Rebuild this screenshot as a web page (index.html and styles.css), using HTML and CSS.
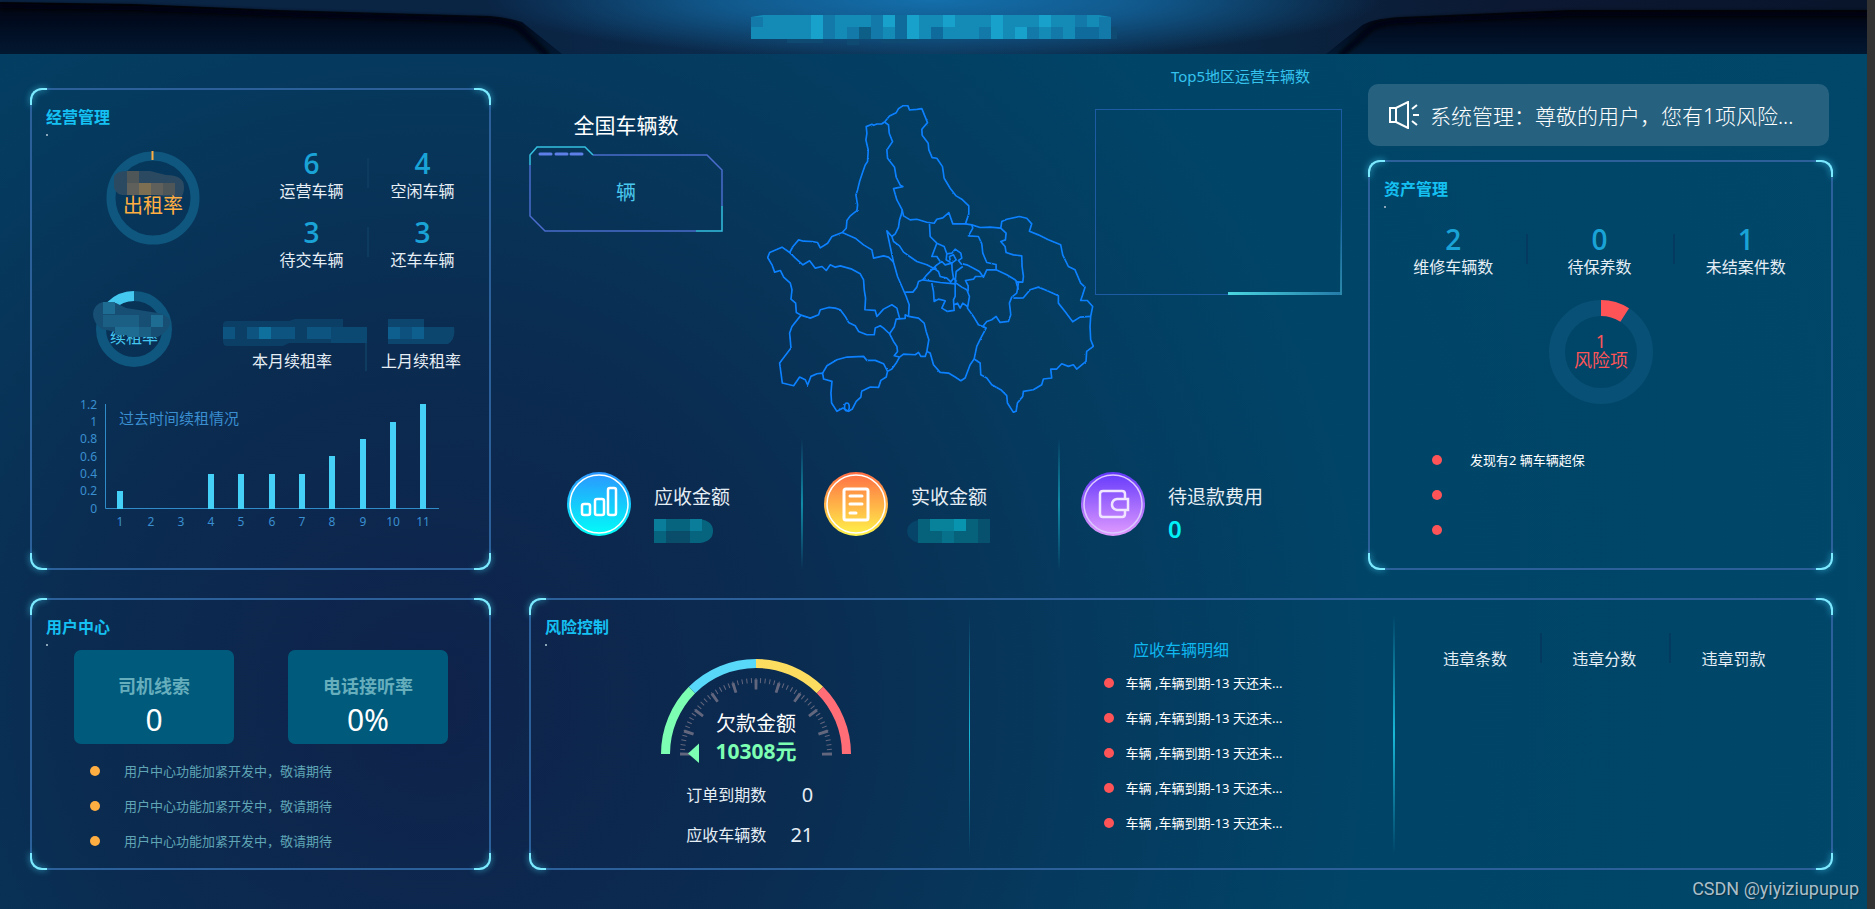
FILE: index.html
```html
<!DOCTYPE html>
<html lang="zh-CN">
<head>
  <meta charset="UTF-8">
  <meta name="viewport" content="width=device-width, initial-scale=1.0">
  <title>车辆运营数据大屏</title>
  <link rel="stylesheet" href="styles.css">
</head>
<body>
  <header class="top-bar">
    <svg class="top-bg" viewBox="0 0 1867 54" preserveAspectRatio="none" aria-hidden="true">
      <defs>
        <linearGradient id="wing" x1="0" y1="0" x2="0" y2="1">
          <stop offset="0" stop-color="#02040c"/>
          <stop offset="0.35" stop-color="#010a1d"/>
          <stop offset="1" stop-color="#021831"/>
        </linearGradient>
        <filter id="edge" x="-5%" y="-20%" width="110%" height="140%">
          <feGaussianBlur stdDeviation="2"/>
        </filter>
      </defs>
      <path d="M0 2L135 4 279 10 490 16Q510 18 522 22L562 54H0z" fill="url(#wing)"/>
      <path d="M0 6L135 8 279 14 490 20Q508 22 518 27L548 56" fill="none" stroke="#000208" stroke-width="5" filter="url(#edge)"/>
      <path d="M1326 54L1360 27Q1368 19 1401 17L1569 10H1867V54z" fill="url(#wing)"/>
      <path d="M1340 56L1368 31Q1374 23 1401 21L1569 14H1867" fill="none" stroke="#000208" stroke-width="5" filter="url(#edge)"/>
    </svg>
    <svg class="top-title" width="366" height="30" viewBox="0 0 366 30" aria-hidden="true">
      <path fill="#0f4a72" d="M-6 12h378v12h-378zM36 24h36v4h-36zM96 24h12v8h-12zM130 24h36v4h-36z"/>
      <path fill="#138bb6" d="M0 2L12 0H348L360 2V24H0z"/>
      <path fill="#18a1cb" d="M60 0h12v24h-12zM132 0h12v12h-12zM156 0h12v24h-12zM192 0h12v12h-12zM240 0h12v24h-12zM288 0h12v12h-12zM264 12h12v12h-12z"/>
      <path fill="#1279a8" d="M0 2h12v10H0zM72 0h12v24h-12zM96 12h12v12h-12zM120 0h12v24h-12zM180 12h12v12h-12zM228 12h12v12h-12zM276 12h12v12h-12zM300 12h12v12h-12zM324 0h12v12h-12zM348 2h12v22h-12z"/>
      <path fill="#0f6b9c" d="M144 0h12v24h-12zM324 12h24v12h-24zM180 12h12v12h-12z"/>
      <path fill="#0e5f88" d="M108 12h12v12h-12z"/>
    </svg>
  </header>

  <main class="board">
    <!-- 经营管理 -->
    <section class="panel operate">
      <i class="corner tl"></i><i class="corner tr"></i><i class="corner bl"></i><i class="corner br"></i>
      <h2 class="panel-title">经营管理</h2>
      <div class="rate-row">
        <svg class="ring" width="94" height="94" viewBox="0 0 94 94">
          <circle cx="47" cy="47" r="42" fill="none" stroke="#0f577e" stroke-width="9"/>
          <path d="M45.5 0h2v9h-2z" fill="#ffae42"/>
          <path fill="#2b4a61" d="M8 26Q10 20 20 20H44L60 24Q78 24 78 36T70 48L50 44H16Q7 42 8 32z"/>
          <path fill="#5f5f5c" d="M21 32h24v12h-24zM45 32h12v12h-12z"/>
          <path fill="#7d6f52" d="M33 32h12v12h-12z"/>
          <path fill="#4f5658" d="M21 20h12v12h-12zM57 32h12v12h-12z"/>
          <text x="47" y="62" class="ring-text orange">出租率</text>
        </svg>
        <div class="stats two">
          <div class="stat"><strong>6</strong><span>运营车辆</span></div>
          <div class="stat line"><strong>4</strong><span>空闲车辆</span></div>
          <div class="stat"><strong>3</strong><span>待交车辆</span></div>
          <div class="stat line"><strong>3</strong><span>还车车辆</span></div>
        </div>
      </div>
      <div class="renew-row">
        <svg class="ring" width="76" height="76" viewBox="0 0 76 76">
          <circle cx="38" cy="38" r="33" fill="none" stroke="#0f577e" stroke-width="10"/>
          <path d="M38 5A33 33 0 0 0 15 14.500" fill="none" stroke="#45c8f0" stroke-width="10"/>
          <text x="38" y="52" class="ring-text small cyan">续租率</text>
          <path fill="#174f74" d="M-3 23Q-2 13 7 11L20 12 30 17 62 22Q76 26 74 33T62 46L42 46 6 38Q-3 32-3 23z"/>
          <path fill="#1f6c92" d="M7 11h12v12h-12zM19 36h24v8h-24zM55 24h12v12h-12zM31 38h12v8h-12z"/>
          <path fill="#1b5f84" d="M7 24h12v12h-12zM19 24h24v12h-24zM43 36h12v10h-12z"/>
        </svg>
        <div class="renew first">
          <svg width="144" height="27" viewBox="0 0 144 27" aria-hidden="true">
            <path fill="#0c3f66" d="M4 2H66L72 0H120V8H144V24H66L60 27H4Q0 27 0 22V6Q0 2 4 2z"/>
            <path fill="#0d5480" d="M0 8h12v12h-12zM24 8h48v12h-48zM84 8h24v12h-24z"/>
            <path fill="#10709d" d="M36 8h12v12h-12z"/>
            <path fill="#0c4972" d="M108 8h36v16h-36z"/>
          </svg>
          <span>本月续租率</span>
        </div>
        <div class="renew">
          <svg width="67" height="27" viewBox="0 0 67 27" aria-hidden="true">
            <path fill="#0c466e" d="M0 0H36V8H66Q68 20 60 25H0z"/>
            <path fill="#0e5f8d" d="M0 8h12v12h-12zM24 8h12v12h-12z"/>
            <path fill="#0d527e" d="M12 8h12v12h-12z"/>
          </svg>
          <span>上月续租率</span>
        </div>
      </div>
      <svg class="bar-chart" width="370" height="135" viewBox="0 0 370 135">
        <g class="axis-y">
          <text x="22" y="14">1.2</text>
          <text x="22" y="31">1</text>
          <text x="22" y="48">0.8</text>
          <text x="22" y="66">0.6</text>
          <text x="22" y="83">0.4</text>
          <text x="22" y="100">0.2</text>
          <text x="22" y="118">0</text>
        </g>
        <path d="M30.500 9V113.500H364" fill="none" stroke="#2f8cc8"/>
        <text x="44" y="29" class="chart-title">过去时间续租情况</text>
        <g fill="#45d0f8">
          <rect x="42" y="96" width="6" height="18"/>
          <rect x="133" y="79" width="6" height="35"/>
          <rect x="163" y="79" width="6" height="35"/>
          <rect x="194" y="79" width="6" height="35"/>
          <rect x="224" y="79" width="6" height="35"/>
          <rect x="254" y="61" width="6" height="53"/>
          <rect x="285" y="44" width="6" height="70"/>
          <rect x="315" y="27" width="6" height="87"/>
          <rect x="345" y="9" width="6" height="105"/>
        </g>
        <g class="axis-x">
          <text x="45" y="131">1</text>
          <text x="76" y="131">2</text>
          <text x="106" y="131">3</text>
          <text x="136" y="131">4</text>
          <text x="166" y="131">5</text>
          <text x="197" y="131">6</text>
          <text x="227" y="131">7</text>
          <text x="257" y="131">8</text>
          <text x="288" y="131">9</text>
          <text x="318" y="131">10</text>
          <text x="348" y="131">11</text>
        </g>
      </svg>
    </section>

    <!-- 中间地图 -->
    <section class="center">
      <div class="center-top">
        <div class="total">
          <h3>全国车辆数</h3>
          <div class="total-box">
            <svg width="194" height="86" viewBox="0 0 194 86" fill="none" aria-hidden="true">
              <path d="M64 9H178L193 24V60M167 85H16L1 70V19" stroke="#4a6ccc" stroke-width="1.500"/>
              <path d="M1 19V9L8 1H56L64 9M193 60V85H167" stroke="#35c0e0" stroke-width="1.500"/>
              <path d="M11 8H22M27 8H38M42 8H53" stroke="#5f7fe8" stroke-width="3" stroke-linecap="round"/>
            </svg>
            <span>辆</span>
          </div>
        </div>
        <svg class="map" width="328" height="312" viewBox="80 40 985 935" fill="none" stroke="#0a80ff" stroke-width="5" stroke-linejoin="round" aria-label="地图">
          <filter id="rough" x="0" y="0" width="100%" height="100%">
            <feTurbulence type="fractalNoise" baseFrequency="0.25" numOctaves="2" seed="4"/>
            <feDisplacementMap in="SourceGraphic" scale="5" xChannelSelector="R" yChannelSelector="G"/>
          </filter>
          <g filter="url(#rough)">
            <path d="M433 96L424 102 410 102 400 106 395 103 378 110 380 130 377 150 384 180 382 215 375 225 368 245 358 275 352 300 347 315 352 345 350 362 330 378 320 392 318 415 306 428 275 440 262 460 240 474 232 458 215 455 190 454 175 450 158 470 148 488 125 472 88 488 82 503 95 525 103 547 120 542 130 562 150 580 155 600 152 628 166 640 168 668 182 676 155 710 148 730 152 775 118 820 122 850 126 880 160 888 178 862 195 870 202 886 212 860 230 852 247 850 250 868 275 875 272 910 274 940 290 965 308 955 325 965 336 958 348 935 362 922 364 905 390 892 415 893 422 872 438 862 442 845 455 838 468 820 478 802"/>
            <path d="M433 96L448 78 468 68 475 56 490 46 503 47 508 60 530 58 545 56 562 98 545 118 546 136 564 160 566 180 576 203 590 205 607 230 612 265 630 295 648 318 665 328 686 348 686 372 676 402 695 405 720 413 750 412 782 415 785 395 800 388 838 380 860 385 875 402 868 424 895 435 925 450 962 465 968 495 985 530 1005 540 1022 580 1035 592 1028 615 1022 632 1042 632 1058 650 1052 680 1050 710 1052 750 1060 770 1040 785 1038 815 1010 838 1000 825 985 830 965 822 950 838 932 838 935 865 910 868 905 885 880 900 850 905 848 920 832 940 828 965 820 968 802 940 800 918 782 900 755 885 740 865 722 855 720 820 702 808"/>
            <path d="M247 850L260 828 290 810 320 802 370 800 380 812 405 812 430 822 442 845"/>
            <path d="M478 802L462 798 472 785 470 770 460 755 448 732 430 715 420 708 405 715 402 735 380 735 355 725 345 708 325 698 315 680 300 660 285 655 265 653 240 660 235 675 210 685 182 676"/>
            <path d="M448 732L462 712 468 688 495 686 495 675 505 680"/>
            <path d="M148 488L165 505 188 525 208 513 225 535 245 530 258 542 270 525 285 532 300 528 335 538 360 552 370 570 372 600 376 625 374 660 405 662 410 680 430 658 455 645 470 655 478 685"/>
            <path d="M306 428L345 445 370 465 395 480 400 505 430 498 445 502 460 517"/>
            <path d="M455 440L440 423 450 470 460 517 472 560 485 590 498 620 507 645 505 680"/>
            <path d="M433 96L445 105 447 130 457 155 440 180 442 205 463 232 468 262 480 286 488 290 460 296 470 330 486 360 484 372 478 390 475 412 465 432 455 440 460 455 478 468 490 487 530 515 560 525 580 535"/>
            <path d="M486 360L490 378 510 390 530 388 560 397 582 400 590 388 608 384 626 368 638 402 676 402"/>
            <path d="M738 715L715 705 700 680 682 655 688 620 680 600 665 592 645 578 648 545 668 530"/>
            <path d="M702 808L710 770 722 745 738 715 728 710 740 695 755 690 768 680 780 698 805 695 812 675 808 640 815 622 830 610 835 580 825 570 800 555 768 540"/>
            <path d="M820 625L850 624 870 600 895 592 920 602 955 618 955 640 975 665 998 696 1020 682 1052 680"/>
            <path d="M782 415L798 430 796 450 782 455 795 470 798 488 820 495 845 498 846 530 850 560 848 577 828 576 835 600"/>
            <path d="M695 405L698 415 685 438 715 440 725 462 728 490 740 518 768 524 768 540 740 540 730 562 718 545 700 535 680 525 668 522"/>
            <path d="M684 605L684 588 676 572 700 568 706 560 725 560"/>
            <path d="M568 402L570 440 590 460 612 470 620 492M590 460L575 500 590 500 600 515"/>
            <path d="M620 492L635 490 645 478 662 490 665 505 655 512 665 525M620 492L618 510 635 520 648 510 640 495 628 500 630 512"/>
            <path d="M580 535L595 545 600 560 620 565 632 576 640 565 636 540 635 520 615 525 605 515 590 525 580 535 560 555 548 570 600 578 645 582M640 565L650 575M570 540L590 536"/>
            <path d="M548 570L535 575 530 592 518 607 495 607"/>
            <path d="M575 580L580 605 582 635 595 628 615 633 605 655 622 665 642 662 640 630 645 620 645 582M642 645L652 640 660 655 668 640 682 650"/>
            <path d="M505 680L535 685 552 700 558 725 566 750 560 785 555 800 542 800 535 788 525 795 490 793 478 802"/>
            <path d="M560 785L570 790 580 825 600 848 625 850 645 862 662 873 675 865 690 825 702 808"/>
            <ellipse cx="320" cy="952" rx="7" ry="12"/>
          </g>
        </svg>
        <div class="top-five">
          <h3>Top5地区运营车辆数</h3>
          <div class="top-five-box"></div>
        </div>
      </div>
      <div class="money">
        <div class="money-item">
          <svg width="64" height="64" viewBox="0 0 64 64" fill="none" stroke="#fff" aria-hidden="true">
            <defs><linearGradient id="blue" x1="0" y1="0" x2="0" y2="1"><stop stop-color="#2b95ff"/><stop offset="1" stop-color="#00fff8"/></linearGradient></defs>
            <circle cx="32" cy="32" r="32" fill="url(#blue)" stroke="none"/>
            <circle cx="32" cy="32" r="29" stroke-width="1.500"/>
            <g stroke-width="2.500">
              <rect x="15" y="32" width="8" height="11" rx="2"/>
              <rect x="28" y="27" width="9" height="16" rx="2"/>
              <rect x="41" y="16" width="8" height="27" rx="2"/>
            </g>
          </svg>
          <div><h4>应收金额</h4>
            <svg width="59" height="24" viewBox="0 0 59 24" aria-hidden="true">
              <path fill="#07647f" d="M0 0H46Q59 2 59 12T46 24H0z"/>
              <path fill="#0a7d9a" d="M0 0h12v12h-12zM36 0h12v12h-12z"/>
              <path fill="#0a4d6b" d="M12 12h24v12h-24z"/>
            </svg>
          </div>
        </div>
        <div class="money-item">
          <svg width="64" height="64" viewBox="0 0 64 64" fill="none" stroke="#fff" aria-hidden="true">
            <defs><linearGradient id="gold" x1="0" y1="0" x2="0" y2="1"><stop stop-color="#ff6d45"/><stop offset="1" stop-color="#fff54a"/></linearGradient></defs>
            <circle cx="32" cy="32" r="32" fill="url(#gold)" stroke="none"/>
            <circle cx="32" cy="32" r="29" stroke-width="1.500"/>
            <rect x="20" y="17" width="24" height="31" rx="2" stroke-width="3"/>
            <path d="M26 24H38M26 32H38M26 41H32" stroke-width="3" stroke-linecap="round"/>
          </svg>
          <div><h4>实收金额</h4>
            <svg class="wide" width="83" height="24" viewBox="0 0 83 24" aria-hidden="true">
              <path fill="#06617a" d="M11 0H83V24H11z"/>
              <path fill="#064469" d="M11 1Q0 4 0 12T11 24z"/>
              <path fill="#07829a" d="M23 0h12v12h-12zM35 0h12v12h-12z"/>
              <path fill="#0894ae" d="M47 0h12v12h-12z"/>
              <path fill="#07708a" d="M35 12h12v12h-12z"/>
              <path fill="#07506e" d="M71 0h12v24h-12z"/>
            </svg>
          </div>
        </div>
        <div class="money-item">
          <svg width="64" height="64" viewBox="0 0 64 64" fill="none" stroke="#fff" aria-hidden="true">
            <defs><linearGradient id="violet" x1="0" y1="0" x2="0" y2="1"><stop stop-color="#6338fb"/><stop offset="1" stop-color="#e29cff"/></linearGradient></defs>
            <circle cx="32" cy="32" r="32" fill="url(#violet)" stroke="none"/>
            <circle cx="32" cy="32" r="29" stroke="#dcc8ff" stroke-width="1.500"/>
            <path d="M44 27V22Q44 19 41 19H22Q19 19 19 22V42Q19 45 22 45H41Q44 45 44 42V38" stroke="#f0e6ff" stroke-width="2.500"/>
            <path d="M47 27V38H36Q31 37 31 32.500T36 27z" stroke="#f0e6ff" stroke-width="2.500"/>
          </svg>
          <div><h4>待退款费用</h4><strong>0</strong></div>
        </div>
      </div>
    </section>

    <!-- 右侧 -->
    <div class="side">
      <div class="notice">
        <svg width="32" height="28" viewBox="0 0 32 28" fill="none" stroke="#fff" stroke-width="2" aria-hidden="true">
          <path d="M2 7H8L20 1V27L8 21H2zM8 7V21"/>
          <path d="M24 8L29 4M25 14H31M24 20L29 24"/>
        </svg>
        <p>系统管理：尊敬的用户，您有1项风险...</p>
      </div>
      <section class="panel assets">
        <i class="corner tl"></i><i class="corner tr"></i><i class="corner bl"></i><i class="corner br"></i>
        <h2 class="panel-title">资产管理</h2>
        <div class="stats three">
          <div class="stat"><strong>2</strong><span>维修车辆数</span></div>
          <div class="stat line dark"><strong>0</strong><span>待保养数</span></div>
          <div class="stat line dark"><strong>1</strong><span>未结案件数</span></div>
        </div>
        <svg class="risk-ring" width="104" height="104" viewBox="0 0 104 104">
          <circle cx="52" cy="52" r="44" fill="none" stroke="#085075" stroke-width="16"/>
          <path d="M52 8A44 44 0 0 1 75.700 15" fill="none" stroke="#ff5457" stroke-width="16"/>
          <text x="52" y="48" class="ring-text mid red">1</text>
          <text x="52" y="67" class="ring-text mid red">风险项</text>
        </svg>
        <ul class="dot-list red">
          <li>发现有2 辆车辆超保</li>
          <li></li>
          <li></li>
        </ul>
      </section>
    </div>

    <!-- 用户中心 -->
    <section class="panel users">
      <i class="corner tl"></i><i class="corner tr"></i><i class="corner bl"></i><i class="corner br"></i>
      <h2 class="panel-title">用户中心</h2>
      <div class="cards">
        <div class="card"><h4>司机线索</h4><p>0</p></div>
        <div class="card"><h4>电话接听率</h4><p>0%</p></div>
      </div>
      <ul class="dot-list orange">
        <li>用户中心功能加紧开发中，敬请期待</li>
        <li>用户中心功能加紧开发中，敬请期待</li>
        <li>用户中心功能加紧开发中，敬请期待</li>
      </ul>
    </section>

    <!-- 风险控制 -->
    <section class="panel risk">
      <i class="corner tl"></i><i class="corner tr"></i><i class="corner bl"></i><i class="corner br"></i>
      <div class="risk-col">
        <h2 class="panel-title">风险控制</h2>
        <svg class="gauge" width="190" height="110" viewBox="0 0 190 110">
          <g fill="none" stroke-width="9">
            <path d="M4.500 95A90.500 90.500 0 0 1 31 31" stroke="#7cffb2"/>
            <path d="M31 31A90.500 90.500 0 0 1 95 4.500" stroke="#58d9f9"/>
            <path d="M95 4.500A90.500 90.500 0 0 1 159 31" stroke="#fddd60"/>
            <path d="M159 31A90.500 90.500 0 0 1 185.500 95" stroke="#ff6e76"/>
          </g>
          <path d="M21.500 95A73.500 73.500 0 0 1 168.500 95" fill="none" stroke="#63677e" stroke-width="5" pathLength="1800" stroke-dasharray="8 28" stroke-dashoffset="4"/>
          <path d="M24 96.500A71 71 0 0 1 166 96.500" fill="none" stroke="#63677e" stroke-width="10" pathLength="1824" stroke-dasharray="24 156"/>
          <path d="M27 94.500L38 84.500V104z" fill="#7cffb2"/>
          <text x="95" y="72" class="gauge-name">欠款金额</text>
          <text x="95" y="100" class="gauge-value">10308元</text>
        </svg>
        <dl class="counts">
          <div><dt>订单到期数</dt><dd>0</dd></div>
          <div><dt>应收车辆数</dt><dd>21</dd></div>
        </dl>
      </div>
      <div class="risk-col detail">
        <h3>应收车辆明细</h3>
        <ul class="dot-list red">
          <li>车辆 ,车辆到期-13 天还未...</li>
          <li>车辆 ,车辆到期-13 天还未...</li>
          <li>车辆 ,车辆到期-13 天还未...</li>
          <li>车辆 ,车辆到期-13 天还未...</li>
          <li>车辆 ,车辆到期-13 天还未...</li>
        </ul>
      </div>
      <div class="risk-col fines">
        <div class="stats three">
          <div class="stat"><span>违章条数</span></div>
          <div class="stat line dark"><span>违章分数</span></div>
          <div class="stat line dark"><span>违章罚款</span></div>
        </div>
      </div>
    </section>
  </main>

  <footer>CSDN @yiyiziupupup</footer>
</body>
</html>
```
FILE: styles.css
```css
* {
  margin: 0;
  padding: 0;
  box-sizing: border-box;
}

body {
  min-height: 100vh;
  display: flex;
  flex-direction: column;
  border-right: 8px solid #333;
  background: radial-gradient(circle at 23% 77%, #0f224a 0%, #0b2b50 22%, #053a5e 41%, #004568 60%, #00476a 100%);
  color: #e6eef5;
  font-family: "Noto Sans", "Noto Sans CJK SC", sans-serif;
}

h2, h3, h4 {
  font-weight: 400;
}

svg {
  display: block;
  flex-shrink: 0;
}

/* Header */
.top-bar {
  display: grid;
  height: 54px;
  background:
    radial-gradient(ellipse 24% 110% at 50% 0, #146fab 0%, #115a8e 45%, rgba(14, 60, 100, 0) 100%),
    linear-gradient(90deg, #0a2444 0%, #0a2444 30%, #0d3558 50%, #0a2440 68%, #0c1731 82%, #08152b 100%);
}

.top-bg,
.top-title {
  grid-area: 1 / 1;
}

.top-bg {
  width: 100%;
  height: 54px;
}

.top-title {
  justify-self: center;
  margin-top: 15px;
}

/* Board */
.board {
  flex: 1;
  display: grid;
  grid-template-columns: 461fr 825fr 465fr;
  grid-template-rows: 506fr 272fr;
  gap: 28px 26px;
  padding: 10px 34px 0 30px;
}

.panel {
  position: relative;
  border: 2px solid #2b609b;
  border-radius: 12px;
  padding-top: 15px;
}

.corner {
  position: absolute;
  width: 17px;
  height: 17px;
  border: 0 solid #7ceaff;
  filter: drop-shadow(0 0 3px #3fc8e8);
}

.tl {
  top: -2px;
  left: -2px;
  border-width: 2px 0 0 2px;
  border-top-left-radius: 12px;
}

.tr {
  top: -2px;
  right: -2px;
  border-width: 2px 2px 0 0;
  border-top-right-radius: 12px;
}

.bl {
  bottom: -2px;
  left: -2px;
  border-width: 0 0 2px 2px;
  border-bottom-left-radius: 12px;
}

.br {
  bottom: -2px;
  right: -2px;
  border-width: 0 2px 2px 0;
  border-bottom-right-radius: 12px;
}

.panel-title {
  padding-left: 14px;
  font-size: 16px;
  font-weight: 700;
  line-height: 24px;
  color: #15c0f2;
}

.panel-title::after {
  content: "";
  display: block;
  width: 2px;
  height: 2px;
  margin-top: 5px;
  background: #8aa5b8;
}

/* Numbers */
.stats {
  display: grid;
}

.two {
  grid-template-columns: repeat(2, 111px);
  row-gap: 13px;
}

.three {
  grid-template-columns: repeat(3, 1fr);
}

.stat {
  text-align: center;
}

.stat strong {
  display: block;
  font-family: "Open Sans", "Noto Sans", sans-serif;
  font-size: 28px;
  font-weight: 600;
  line-height: 32px;
  color: #1aa3d6;
}

.stat span {
  display: block;
  font-size: 16px;
  line-height: 24px;
}

.line {
  background: linear-gradient(#0d3b60, #0d3b60) no-repeat 0 11px / 2px 30px;
}

.dark {
  background-image: linear-gradient(#053a60, #053a60);
}

/* 经营管理 */
.operate {
  margin-top: 24px;
}

.rate-row {
  display: flex;
  align-items: flex-start;
  margin-top: 11px;
  padding: 0 11px 0 74px;
}

.rate-row .ring {
  margin-top: 4px;
}

.rate-row .stats {
  margin-left: auto;
}

.ring,
.gauge {
  overflow: visible;
}

.ring-text {
  font-size: 20px;
  text-anchor: middle;
}

.ring-text.small {
  font-size: 16px;
}

.ring-text.mid {
  font-size: 18px;
}

.ring-text.orange {
  fill: #ffae42;
}

.ring-text.cyan {
  fill: #45c8f0;
}

.ring-text.red {
  fill: #ff5457;
}

.renew-row {
  display: flex;
  margin-top: 19px;
  padding-left: 64px;
}

.renew {
  margin: 28px 0 0 14px;
  width: 80px;
  display: flex;
  flex-direction: column;
  align-items: center;
  gap: 3px;
  font-size: 16px;
  line-height: 24px;
}

.renew.first {
  width: 144px;
  margin-left: 51px;
  background: linear-gradient(#0e3c60, #0e3c60) no-repeat 100% 24px / 2px 28px;
}

.renew.first span {
  margin-right: 6px;
}

.bar-chart {
  margin: 22px 0 0 43px;
  font-size: 12px;
  fill: #3a8fd0;
}

.axis-y {
  text-anchor: end;
}

.axis-x {
  text-anchor: middle;
}

.chart-title {
  font-size: 15px;
}

/* 中间 */
.center {
  display: flex;
  flex-direction: column;
  padding-left: 12px;
}

.center-top {
  display: flex;
}

.total h3 {
  margin-top: 47px;
  font-size: 21px;
  line-height: 28px;
  color: #fff;
  text-align: center;
}

.total-box {
  display: grid;
  place-items: center;
  margin-top: 7px;
  font-size: 20px;
  color: #4ac8ee;
}

.total-box > * {
  grid-area: 1 / 1;
}

.total-box span {
  padding-top: 4px;
}

.map {
  margin: 39px 0 0 auto;
}

.top-five {
  width: 247px;
}

.top-five h3 {
  padding-left: 44px;
  font-size: 15px;
  line-height: 24px;
  text-align: center;
  color: #35c3ee;
  white-space: nowrap;
}

.top-five-box {
  position: relative;
  height: 186px;
  margin-top: 21px;
  border: 1px solid #1d5ca4;
}

.top-five-box::before,
.top-five-box::after {
  content: "";
  position: absolute;
  right: -1px;
  bottom: -1px;
}

.top-five-box::before {
  width: 114px;
  height: 3px;
  background: linear-gradient(90deg, #4ad6e0, #237aa8);
}

.top-five-box::after {
  width: 2px;
  height: 90px;
  background: linear-gradient(rgba(40, 130, 170, 0), #2b8aac);
}

.money {
  display: grid;
  grid-template-columns: repeat(3, 1fr);
  margin: auto 27px 0 15px;
}

.money-item {
  display: flex;
  align-items: center;
  gap: 23px;
  height: 132px;
  padding-left: 23px;
}

.money-item + .money-item {
  background: linear-gradient(rgba(20, 140, 165, 0), #118ca8 50%, rgba(20, 140, 165, 0)) no-repeat 0 0 / 2px 100%;
}

.money-item div {
  padding-top: 20px;
}

.money-item h4 {
  font-size: 19px;
  line-height: 30px;
}

.money-item div svg {
  margin: 7px 0 3px;
}

.money-item div .wide {
  margin-left: -4px;
}

.money-item strong {
  display: block;
  font-size: 24px;
  font-weight: 600;
  line-height: 34px;
  color: #00f2f7;
}

/* 右侧 */
.side {
  display: flex;
  flex-direction: column;
  gap: 14px;
  padding-top: 20px;
}

.notice {
  display: flex;
  align-items: center;
  gap: 10px;
  margin-right: 4px;
  padding: 0 20px;
  min-height: 62px;
  border-radius: 10px;
  background: #266280;
  color: #fff;
  font-size: 21px;
  font-weight: 300;
  white-space: nowrap;
}

.assets {
  flex: 1;
}

.assets .stats {
  margin: 15px 12px 0 10px;
}

.risk-ring {
  margin: 21px auto 0;
}

.dot-list {
  list-style: none;
  font-size: 13px;
}

.dot-list li {
  display: flex;
  align-items: center;
  height: 35px;
}

.dot-list li::before {
  content: "";
  width: 10px;
  height: 10px;
  border-radius: 50%;
}

.dot-list.red li::before {
  background: #ff5457;
}

.dot-list.orange li::before {
  background: #ffae42;
}

.assets .dot-list {
  margin-top: 38px;
  padding-left: 62px;
  color: #fff;
}

.assets li {
  gap: 28px;
}

/* 用户中心 */
.cards {
  display: flex;
  justify-content: space-between;
  margin: 4px 41px 0 42px;
}

.card {
  width: 160px;
  height: 94px;
  padding-top: 24px;
  border-radius: 7px;
  background: #005a7c;
  text-align: center;
}

.card h4 {
  font-size: 18px;
  font-weight: 700;
  line-height: 24px;
  color: #67aebd;
}

.card p {
  font-size: 30px;
  line-height: 44px;
  color: #fff;
}

.users .dot-list {
  margin-top: 9px;
  padding-left: 58px;
  color: #5fa5b5;
}

.users li {
  gap: 24px;
}

/* 风险控制 */
.risk {
  grid-column: 2 / 4;
  display: grid;
  grid-template-columns: 34fr 33fr 34fr;
  margin-left: 12px;
}

.risk-col + .risk-col {
  background: linear-gradient(rgba(26, 184, 216, 0), #1ab8d8 50%, rgba(26, 184, 216, 0)) no-repeat 0 0 / 1px 238px;
}

.risk-col.fines {
  background-size: 2px 238px;
}

.gauge {
  margin: 13px auto 0;
  padding-left: 12px;
  box-sizing: content-box;
  text-anchor: middle;
}

.gauge-name {
  font-size: 20px;
  fill: #fff;
}

.gauge-value {
  font-size: 21px;
  font-weight: 700;
  fill: #7cffb2;
}

.counts {
  width: 127px;
  margin: 6px auto 0;
}

.counts div {
  display: flex;
  justify-content: space-between;
  line-height: 40px;
}

.counts dt {
  font-size: 16px;
}

.counts dd {
  font-size: 20px;
}

.detail h3 {
  padding-top: 23px;
  font-size: 16px;
  line-height: 24px;
  text-align: center;
  color: #10b8f0;
}

.detail .dot-list {
  margin-top: 3px;
  padding-left: 135px;
  color: #fff;
}

.detail li {
  gap: 12px;
}

.fines .stats {
  margin: 18px 33px 0 17px;
}

.fines .stat {
  padding-top: 14px;
  background-position: 0 0;
}

footer {
  height: 39px;
  padding-right: 8px;
  font: 18px/38px Roboto, sans-serif;
  text-align: right;
  color: #a9bfcb;
  text-shadow: 1px 1px 1px #12303f;
}
```
